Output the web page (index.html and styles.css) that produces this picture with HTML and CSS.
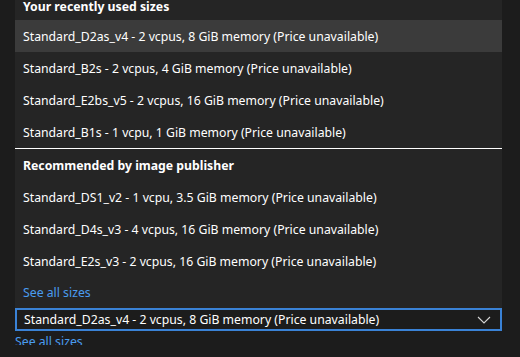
FILE: index.html
```html
<!DOCTYPE html>
<html>
<head>
<meta charset="utf-8">
<link rel="stylesheet" href="styles.css">
</head>
<body>
<div class="page">
  <div class="panel">
    <div class="group-head first">Your recently used sizes</div>
    <div class="opt hover">Standard_D2as_v4 - 2 vcpus, 8 GiB memory (Price unavailable)</div>
    <div class="opt">Standard_B2s - 2 vcpus, 4 GiB memory (Price unavailable)</div>
    <div class="opt">Standard_E2bs_v5 - 2 vcpus, 16 GiB memory (Price unavailable)</div>
    <div class="opt">Standard_B1s - 1 vcpu, 1 GiB memory (Price unavailable)</div>
    <div class="divider"></div>
    <div class="group-head">Recommended by image publisher</div>
    <div class="opt">Standard_DS1_v2 - 1 vcpu, 3.5 GiB memory (Price unavailable)</div>
    <div class="opt">Standard_D4s_v3 - 4 vcpus, 16 GiB memory (Price unavailable)</div>
    <div class="opt">Standard_E2s_v3 - 2 vcpus, 16 GiB memory (Price unavailable)</div>
    <div class="opt link-row"><a class="link" href="#">See all sizes</a></div>
  </div>
  <div class="select">
    <span class="value">Standard_D2as_v4 - 2 vcpus, 8 GiB memory (Price unavailable)</span>
    <svg class="chev" width="14" height="8" viewBox="0 0 14 8"><path d="M1 1 L7 7 L13 1" fill="none" stroke="#d6d6d6" stroke-width="1.1"/></svg>
  </div>
  <a class="link outer" href="#">See all sizes</a>
</div>
</body>
</html>
```
FILE: styles.css
```css
html, body {
  margin: 0;
  padding: 0;
  background: #1c1c1c;
  overflow: hidden;
}
.page {
  width: 520px;
  height: 357px;
  font-family: "Noto Sans", "Open Sans", sans-serif;
  font-size: 12.25px;
  color: #ffffff;
}
.panel {
  margin-left: 15px;
  width: 487px;
  margin-top: -12px;
  background: #252525;
  display: flex;
  flex-direction: column;
}
.group-head {
  height: 32px;
  display: flex;
  align-items: center;
  padding-left: 8px;
  font-weight: 700;
}
.group-head.first {
  align-items: flex-end;
  padding-bottom: 5px;
  box-sizing: border-box;
}
.opt {
  height: 32px;
  display: flex;
  align-items: center;
  padding-left: 8px;
}
.opt.hover {
  background: #3b3b3b;
}
.link-row {
  height: 31px;
}
.divider {
  height: 1px;
  background: #ffffff;
}
.link {
  color: #4a9cf0;
  text-decoration: none;
}
.select {
  margin-left: 15px;
  width: 487px;
  height: 23px;
  box-sizing: border-box;
  border: 2px solid #3a82d6;
  display: flex;
  align-items: center;
  justify-content: space-between;
  padding: 0 9px 0 7px;
  background: #1c1c1c;
}
.chev {
  display: block;
}
.outer {
  display: block;
  margin-left: 15px;
  margin-top: 3px;
  line-height: 16px;
}
```
